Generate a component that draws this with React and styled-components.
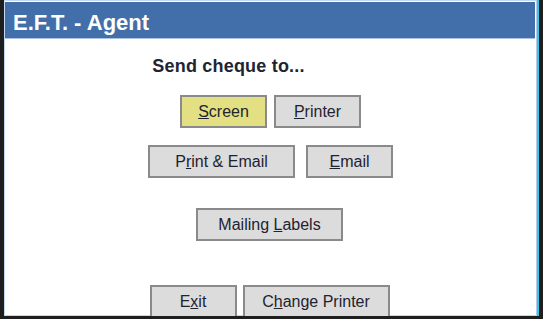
import React from 'react'
import styled, { createGlobalStyle } from 'styled-components'

const Global = createGlobalStyle`
  html, body {
    margin: 0;
    padding: 0;
    background: #1e1e1e;
    overflow: hidden;
  }
`

const Screen = styled.div`
  width: 543px;
  height: 319px;
  display: flex;
  align-items: flex-start;
  padding-left: 4px;
  box-sizing: border-box;
`

const Frame = styled.div`
  width: 535px;
  height: 316px;
  box-sizing: border-box;
  border-right: 2px solid #39c3e6;
  overflow: hidden;
`

const Window = styled.div`
  height: 100%;
  box-sizing: border-box;
  background: #fff;
  border: 1px solid #c4d8f2;
  border-right: 1px solid #b7cbe8;
  display: flex;
  flex-direction: column;
  font-family: "Liberation Sans", Arial, sans-serif;
`

const TitleBar = styled.div`
  height: 37px;
  flex-shrink: 0;
  box-sizing: border-box;
  margin: 1px 1px 0 0;
  background: #426fa9;
  border-bottom: 1px solid #a9c2e4;
  display: flex;
  align-items: center;
  padding: 5px 0 0 8px;
  color: #fff;
  font-size: 22px;
  font-weight: bold;
`

const Body = styled.div`
  display: flex;
  flex-direction: column;
  align-items: center;
  padding-top: 17px;
`

const Heading = styled.div`
  font-size: 18px;
  line-height: 21px;
  font-weight: bold;
  color: #1d2433;
  margin-left: -84px;
  margin-bottom: 18px;
  letter-spacing: 0.2px;
`

const Row = styled.div`
  display: flex;
  justify-content: center;
  gap: ${(p) => p.$gap || 7}px;
  margin-top: ${(p) => p.$top || 0}px;
  margin-left: ${(p) => p.$shift || 0}px;
`

const Button = styled.button`
  width: ${(p) => (p.$wide ? 147 : 87)}px;
  height: 33px;
  box-sizing: border-box;
  border: 2px solid #8a8a8a;
  background: ${(p) => (p.$active ? '#e2e083' : '#dcdcdc')};
  color: #1f2330;
  font-family: "Liberation Sans", Arial, sans-serif;
  font-size: 16px;
  padding: 0;
  cursor: pointer;
  u {
    text-decoration: underline;
  }
`

export default function App() {
  return (
    <>
      <Global />
      <Screen>
        <Frame>
          <Window>
            <TitleBar>E.F.T. - Agent</TitleBar>
            <Body>
              <Heading>Send cheque to...</Heading>
              <Row $gap={7}>
                <Button $active><u>S</u>creen</Button>
                <Button><u>P</u>rinter</Button>
              </Row>
              <Row $gap={11} $top={17}>
                <Button $wide>P<u>r</u>int &amp; Email</Button>
                <Button><u>E</u>mail</Button>
              </Row>
              <Row $top={30} $shift={-2}>
                <Button $wide>Mailing <u>L</u>abels</Button>
              </Row>
              <Row $gap={6} $top={44} $shift={-2}>
                <Button>E<u>x</u>it</Button>
                <Button $wide>C<u>h</u>ange Printer</Button>
              </Row>
            </Body>
          </Window>
        </Frame>
      </Screen>
    </>
  )
}
